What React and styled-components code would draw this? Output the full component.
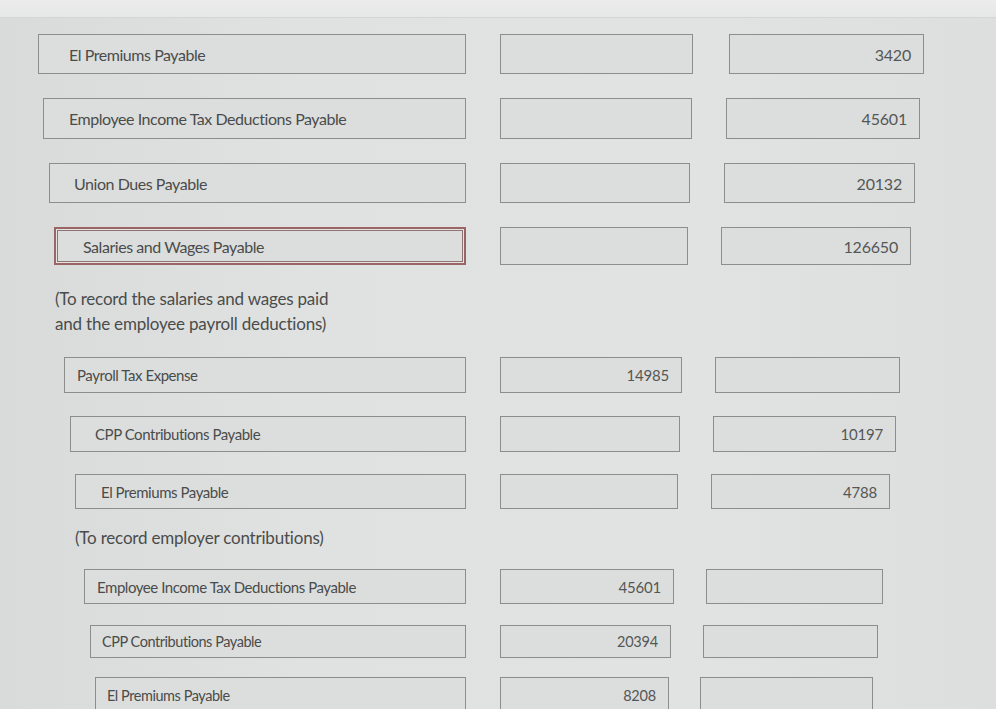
import React from "react"
import styled, { createGlobalStyle } from "styled-components"

const Global = createGlobalStyle`
    html, body {
        margin: 0;
        padding: 0;
        background: #dfe1e0;
        font-family: Lato, "Open Sans", sans-serif;
        overflow: hidden;
    }
`

const Page = styled.div`
    width: 996px;
    height: 709px;
    overflow: hidden;
    background: linear-gradient(90deg, #d9dbda 0%, #e0e2e1 30%, #e1e3e2 70%, #dddfde 100%);
`
const TopBar = styled.div`
    height: 17px;
    background: linear-gradient(180deg, #ececec 0%, #e6e7e7 100%);
    border-bottom: 1px solid #d4d6d5;
`
const List = styled.div`
    display: flex;
    flex-direction: column;
`
const Row = styled.div`
    display: flex;
    align-items: flex-start;
    margin-top: ${(p) => p.$mt}px;
    padding-left: ${(p) => p.$indent}px;
    height: ${(p) => p.$h}px;
`
const Account = styled.div`
    box-sizing: border-box;
    width: ${(p) => p.$w}px;
    height: 100%;
    display: flex;
    align-items: center;
    padding-left: ${(p) => p.$pad}px;
    background: #dcdedd;
    border: 1px solid #8c8e8d;
    color: #4a4c4b;
    font-size: ${(p) => p.$fs}px;
    letter-spacing: -0.45px;
    white-space: nowrap;
    ${(p) =>
        p.$active
            ? `
        border: 2px solid #9b6565;
        box-shadow: inset 0 0 0 1px #e4e4e4, inset 0 0 0 2px #8d7373;
    `
            : ""}
`
const Amount = styled.div`
    box-sizing: border-box;
    width: ${(p) => p.$w}px;
    height: 100%;
    margin-left: ${(p) => p.$ml}px;
    display: flex;
    align-items: center;
    justify-content: flex-end;
    padding-right: 12px;
    background: #dcdedd;
    border: 1px solid #8c8e8d;
    color: #555756;
    font-size: ${(p) => p.$fs}px;
    letter-spacing: -0.2px;
`
const Note = styled.div`
    margin-top: ${(p) => p.$mt}px;
    padding-left: ${(p) => p.$indent}px;
    color: #4a4c4b;
    font-size: 17px;
    line-height: 25px;
    letter-spacing: -0.2px;
`

const items = [
    { y: 34, h: 40, x: 38, pad: 30, fs: 16, name: "El Premiums Payable", dw: 193, cx: 729, cw: 195, credit: "3420" },
    { y: 98, h: 41, x: 43, pad: 25, fs: 16, name: "Employee Income Tax Deductions Payable", dw: 192, cx: 726, cw: 194, credit: "45601" },
    { y: 163, h: 40, x: 49, pad: 24, fs: 16, name: "Union Dues Payable", dw: 190, cx: 724, cw: 191, credit: "20132" },
    { y: 227, h: 38, x: 54, pad: 27, fs: 16, name: "Salaries and Wages Payable", dw: 188, cx: 721, cw: 190, credit: "126650", active: true },
    { note: ["(To record the salaries and wages paid", "and the employee payroll deductions)"], y: 286, x: 55 },
    { y: 357, h: 36, x: 64, pad: 12, fs: 15, name: "Payroll Tax Expense", dw: 182, cx: 715, cw: 185, debit: "14985" },
    { y: 416, h: 36, x: 70, pad: 24, fs: 15, name: "CPP Contributions Payable", dw: 180, cx: 713, cw: 183, credit: "10197" },
    { y: 474, h: 35, x: 75, pad: 25, fs: 15, name: "El Premiums Payable", dw: 178, cx: 711, cw: 179, credit: "4788" },
    { note: ["(To record employer contributions)"], y: 525, x: 75 },
    { y: 569, h: 35, x: 84, pad: 12, fs: 15, name: "Employee Income Tax Deductions Payable", dw: 174, cx: 706, cw: 177, debit: "45601" },
    { y: 625, h: 33, x: 90, pad: 11, fs: 14.5, name: "CPP Contributions Payable", dw: 171, cx: 703, cw: 175, debit: "20394" },
    { y: 677, h: 36, x: 95, pad: 11, fs: 14.5, name: "El Premiums Payable", dw: 169, cx: 700, cw: 173, debit: "8208" },
]

function App() {
    let bottom = 18
    return (
        <Page>
            <Global />
            <TopBar />
            <List>
                {items.map((it, i) => {
                    const mt = it.y - bottom
                    if (it.note) {
                        bottom = it.y + it.note.length * 25
                        return (
                            <Note key={i} $mt={mt} $indent={it.x}>
                                {it.note.map((l) => (
                                    <div key={l}>{l}</div>
                                ))}
                            </Note>
                        )
                    }
                    bottom = it.y + it.h
                    const debitX = 500
                    return (
                        <Row key={i} $mt={mt} $indent={it.x} $h={it.h}>
                            <Account
                                $w={466 - it.x}
                                $pad={it.pad}
                                $fs={it.fs}
                                $active={it.active}
                            >
                                {it.name}
                            </Account>
                            <Amount $w={it.dw} $ml={debitX - 466} $fs={it.fs}>
                                {it.debit}
                            </Amount>
                            <Amount
                                $w={it.cw}
                                $ml={it.cx - (debitX + it.dw)}
                                $fs={it.fs}
                            >
                                {it.credit}
                            </Amount>
                        </Row>
                    )
                })}
            </List>
        </Page>
    )
}

export default App
